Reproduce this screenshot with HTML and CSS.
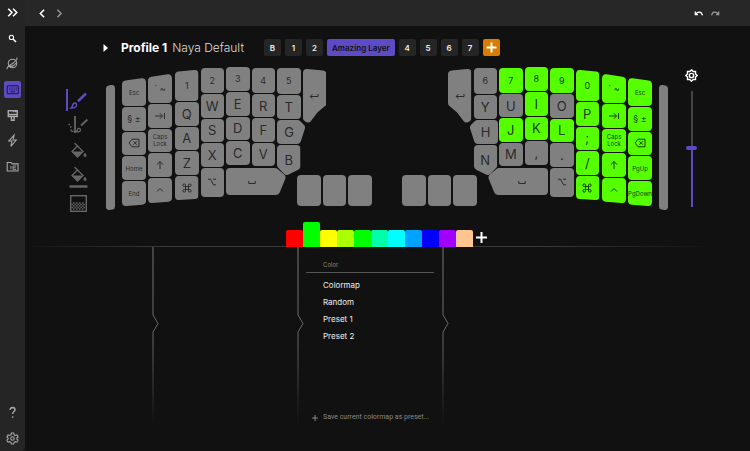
FILE: index.html
```html
<!DOCTYPE html>
<html lang="en">
<head>
<meta charset="utf-8">
<title>Naya Default</title>
<link rel="stylesheet" href="styles.css">
</head>
<body>
<svg class="defs" aria-hidden="true">
  <symbol id="s-top" viewBox="0 0 24 28" preserveAspectRatio="none"><polygon points="4,6.500 20,4.300 20,24 4,24"/></symbol>
  <symbol id="s-bot" viewBox="0 0 24 25" preserveAspectRatio="none"><polygon points="4,4 20,4 20,19.700 4,21"/></symbol>
  <symbol id="s-top2" viewBox="0 0 24 31" preserveAspectRatio="none"><polygon points="4,5.400 20,4 20,27 4,27"/></symbol>
  <symbol id="s-bot2" viewBox="0 0 24 25" preserveAspectRatio="none"><polygon points="4,4 20,4 20,20 4,21"/></symbol>
  <symbol id="s-enter" viewBox="0 0 24 54" preserveAspectRatio="none"><polygon points="4,4 20,5.500 20,34 11.500,41 5,49.500 4,49"/></symbol>
  <symbol id="s-g" viewBox="0 0 28 24" preserveAspectRatio="none"><polygon points="4,4 20.500,4 24,7.500 20,20 4,20"/></symbol>
  <symbol id="s-b" viewBox="0 0 24 31" preserveAspectRatio="none"><polygon points="4,4 20,4 20,22 10,27 4,20.500"/></symbol>
  <symbol id="s-space" viewBox="0 0 60 27" preserveAspectRatio="none"><polygon points="4,4 49,4 55.500,9.500 50,23 4,23"/></symbol>
  <symbol id="s-bar" viewBox="0 0 9 125" preserveAspectRatio="none"><polygon points="3,3.500 6,3 6,121.500 3,122"/></symbol>

  <symbol id="i-tab" viewBox="0 0 12 10"><path d="M1 5h7.500M5.800 2.200L8.600 5 5.800 7.800M10.500 2v6"/></symbol>
  <symbol id="i-del" viewBox="0 0 12 10"><path d="M4 1.200h7v7.600H4L1 5zM5.500 3.300l3.400 3.400M8.900 3.300L5.500 6.700"/></symbol>
  <symbol id="i-up" viewBox="0 0 12 10"><path d="M6 9V1.500M2.800 4.700L6 1.500l3.200 3.200"/></symbol>
  <symbol id="i-caret" viewBox="0 0 12 10"><path d="M3 6.500L6 3.500l3 3"/></symbol>
  <symbol id="i-cmd" viewBox="0 0 12 10"><path d="M4.500 3.500h3v3h-3zM4.500 3.500H3.300A1.300 1.300 0 1 1 4.500 2.200zM7.500 3.500V2.200A1.300 1.300 0 1 1 8.700 3.500zM7.500 6.500h1.200A1.300 1.300 0 1 1 7.500 7.800zM4.500 6.500v1.300A1.300 1.300 0 1 1 3.300 6.500z"/></symbol>
  <symbol id="i-opt" viewBox="0 0 12 10"><path d="M2 2.200h2.500l3 5.600H10M7 2.200h3"/></symbol>
  <symbol id="i-enter" viewBox="0 0 12 10"><path d="M10 3v2.500H2.200M4.400 3.200L2.200 5.500l2.200 2.200"/></symbol>
  <symbol id="i-space" viewBox="0 0 12 10"><path d="M2.800 4v2.500h6.400V4"/></symbol>
  <symbol id="i-bucket" viewBox="0 0 17 17"><path class="solid" d="M2 8.500h11L7.500 14z"/><path d="M4.500 0l3 3M7.500 3L13 8.500 7.500 14 2 8.500z" stroke-width="1.300"/><path class="solid" d="M15 9.500q3 4.200 0 4.400-3-.2 0-4.400z"/></symbol>
  <symbol id="i-edge" viewBox="0 0 7 178" preserveAspectRatio="none"><path d="M1 0V68L6 76.500 1 85V178"/></symbol>
  <linearGradient id="fade" gradientUnits="userSpaceOnUse" x1="0" y1="0" x2="0" y2="178"><stop offset="0" stop-color="#777"/><stop offset=".55" stop-color="#666"/><stop offset="1" stop-color="#111"/></linearGradient>
</svg>

<nav class="sidebar">
  <div class="nav-main">
    <button class="nav bright" aria-label="Expand"><svg viewBox="0 0 16 16"><path d="M4 4.500L7.500 8 4 11.500M8.500 4.500L12 8l-3.500 3.500" stroke-width="1.500"/></svg></button>
    <button class="nav" aria-label="Search"><svg class="bright" viewBox="0 0 16 16"><circle cx="7" cy="7" r="2"/><path d="M8.600 8.600l2.700 2.700" stroke-width="1.400"/></svg></button>
    <button class="nav" aria-label="Devices"><svg viewBox="0 0 16 16"><circle cx="8" cy="8" r="4"/><path d="M11.800 2.500c1.800.5-1.500 4-4.500 6S2 11.800 3 13.500M5 10.500q3.500 1 6.500-3"/></svg></button>
    <button class="nav current" aria-label="Keyboard"><svg viewBox="0 0 16 16"><rect x="3" y="4.500" width="10.500" height="7.500" rx="1"/><path d="M5 6.500h1M7 6.500h1M9 6.500h1M11 6.500h1M5 8.300h1M7 8.300h1M9 8.300h1M11 8.300h1M6 10.200h4.500"/></svg></button>
    <button class="nav" aria-label="Lighting"><svg viewBox="0 0 16 16"><path d="M4 3.500h8.500V9H4zM4 7h8.500M7 9v3.500h2.500V9M9 3.500V5M11 3.500V5" stroke-width="1.300"/></svg></button>
    <button class="nav" aria-label="Actions"><svg viewBox="0 0 16 16"><path d="M9.500 3L4.500 8.500h3L6.500 13.500 11.500 7.500h-3z"/></svg></button>
    <button class="nav" aria-label="Files"><svg viewBox="0 0 16 16"><path d="M3 4.200h3.500l1.200 1.300h5.500v6.800H3z"/><path d="M6.500 7.500v3M8.500 7.500v3.300M8.500 7.500h3M8.500 9.200h2.500M8.500 10.800h3" stroke-width=".8"/></svg></button>
  </div>
  <div class="nav-foot">
    <button class="nav" aria-label="Help"><svg viewBox="0 0 16 16"><path d="M5.700 5.500q.2-2.200 2.400-2.200 2.300.1 2.300 2.100 0 1.200-1.300 1.900-1 .6-1 2.200M8.100 11.500v1.500" stroke-width="1.300"/></svg></button>
    <button class="nav" aria-label="Settings"><svg viewBox="0 0 16 16"><path d="M6.900 2.900h2.200l.4 1.600 1.100.6 1.600-.5 1.100 1.900L12.100 7.600v.9l1.200 1.100-1.100 1.900-1.600-.5-1.100.6-.4 1.600H6.900l-.4-1.600-1.100-.6-1.600.5-1.100-1.900 1.200-1.100v-.9L2.700 6.500l1.100-1.900 1.600.5 1.100-.6z"/><circle cx="8" cy="8" r="1.600"/></svg></button>
  </div>
</nav>

<main class="app">
  <header class="topbar">
    <div class="pair">
      <button class="plain bright" aria-label="Back"><svg viewBox="0 0 16 16"><path d="M9.500 4.500L6 8l3.500 3.500" stroke-width="1.500"/></svg></button>
      <button class="plain" aria-label="Forward"><svg viewBox="0 0 16 16"><path d="M6 4.500L9.500 8 6 11.500" stroke-width="1.300"/></svg></button>
    </div>
    <div class="pair">
      <button class="plain bright" aria-label="Undo"><svg viewBox="0 0 16 16"><path d="M5 6v3h2.500M5.200 8.500Q7 6.500 9 6.700 11 7 11.700 9.700" stroke-width="1.200"/></svg></button>
      <button class="plain" aria-label="Redo"><svg viewBox="0 0 16 16"><path d="M11 6v3H8.500M10.800 8.500Q9 6.500 7 6.700 5 7 4.300 9.700" stroke-width="1.200"/></svg></button>
    </div>
  </header>

  <section class="profile">
    <button class="plain arrow" aria-label="Show profiles"><svg viewBox="0 0 5 8"><path d="M.5 0L5 4 .5 8z"/></svg></button>
    <h1>Profile 1 <span>Naya Default</span></h1>
    <div class="layers">
      <button>B</button><button>1</button><button>2</button><button class="active">Amazing Layer</button><button>4</button><button>5</button><button>6</button><button>7</button>
      <button class="add" aria-label="Add layer"><svg viewBox="0 0 17 17"><path d="M8.500 3.500v10M3.500 8.500h10"/></svg></button>
    </div>
  </section>

  <section class="stage">
    <div class="tools">
      <button class="tool on" aria-label="Brush"><svg viewBox="0 0 24 24"><path d="M1 0v22" stroke-width="2"/><path d="M20 4.500L12 12.200" stroke-width="2.600"/><path d="M5 19q1.500-1 1.500-2.500.5-2.500 2.800-2.500 2 1 1 3-1 2.200-5.300 2z" stroke-width="1.500"/></svg></button>
      <button class="tool" aria-label="Mirror brush"><svg viewBox="0 0 24 24"><path d="M9 2v17M21.500 5.500L15 11.500" stroke-width="1.800"/><path d="M10 17.500q1.500-.5 1.500-2 1-1.800 2.500-.8 1 1.500 0 2.500-1.500 1-4 .3zM7.500 17.500Q5 17.500 4.500 15.500M2.500 10.500h1.500M4 13h1.500" stroke-width="1.300"/></svg></button>
      <button class="tool small" aria-label="Fill"><svg viewBox="0 0 17 17"><use href="#i-bucket"/></svg></button>
      <button class="tool" aria-label="Fill row"><svg viewBox="0 0 24 24"><use href="#i-bucket" x="4" y="1" width="17" height="17"/><path d="M3.500 20.500h18" stroke-width="2.400"/></svg></button>
      <button class="tool small" aria-label="Transparency"><svg viewBox="0 0 17 17"><rect x=".7" y=".7" width="15.600" height="15.600" stroke-width="1.400"/><path d="M3 8h12M3 11h12M3 14h12" stroke-dasharray="1.500 1.500" stroke-width="1.500"/><path d="M1.500 9.500h14M1.500 12.500h14" stroke-dasharray="1.500 1.500" stroke-width="1.500"/></svg></button>
    </div>

    <div class="board">
      <svg class="bar"><use href="#s-bar"/></svg>
      <div class="half left">
        <div class="outer">
          <div class="col c1">
            <button class="key word shaped"><svg class="shape"><use href="#s-top"/></svg><span>Esc</span></button>
            <button class="key num">§ ±</button>
            <button class="key" aria-label="Backspace"><svg class="ico"><use href="#i-del"/></svg></button>
            <button class="key word">Home</button>
            <button class="key word shaped"><svg class="shape"><use href="#s-bot"/></svg><span>End</span></button>
          </div>
          <div class="col c2">
            <button class="key num shaped"><svg class="shape"><use href="#s-top"/></svg><span>` ~</span></button>
            <button class="key" aria-label="Tab"><svg class="ico"><use href="#i-tab"/></svg></button>
            <button class="key word">Caps Lock</button>
            <button class="key" aria-label="Up"><svg class="ico"><use href="#i-up"/></svg></button>
            <button class="key shaped" aria-label="Control"><svg class="shape"><use href="#s-bot"/></svg><svg class="ico"><use href="#i-caret"/></svg></button>
          </div>
        </div>
        <div class="inner">
          <div class="col c3">
            <button class="key num shaped"><svg class="shape"><use href="#s-top2"/></svg><span>1</span></button>
            <button class="key">Q</button><button class="key">A</button><button class="key">Z</button>
            <button class="key shaped" aria-label="Command"><svg class="shape"><use href="#s-bot2"/></svg><svg class="ico"><use href="#i-cmd"/></svg></button>
          </div>
          <div class="col c4">
            <button class="key num">2</button><button class="key">W</button><button class="key">S</button><button class="key">X</button>
            <button class="key" aria-label="Option"><svg class="ico"><use href="#i-opt"/></svg></button>
          </div>
          <div class="mid">
            <div class="col c5"><button class="key num">3</button><button class="key">E</button><button class="key">D</button><button class="key">C</button></div>
            <div class="col c6"><button class="key num">4</button><button class="key">R</button><button class="key">F</button><button class="key">V</button></div>
            <button class="key space shaped" aria-label="Space"><svg class="shape"><use href="#s-space"/></svg><svg class="ico"><use href="#i-space"/></svg></button>
          </div>
          <div class="col c7">
            <button class="key num">5</button><button class="key">T</button>
            <button class="key wide shaped"><svg class="shape"><use href="#s-g"/></svg><span>G</span></button>
            <button class="key shaped"><svg class="shape"><use href="#s-b"/></svg><span>B</span></button>
          </div>
          <div class="col c8"><button class="key shaped" aria-label="Enter"><svg class="shape"><use href="#s-enter"/></svg><svg class="ico"><use href="#i-enter"/></svg></button></div>
        </div>
      </div>

      <div class="thumbs">
        <div class="cluster"><button class="key" aria-label="Left thumb 1"></button><button class="key" aria-label="Left thumb 2"></button><button class="key" aria-label="Left thumb 3"></button></div>
        <div class="cluster"><button class="key" aria-label="Right thumb 1"></button><button class="key" aria-label="Right thumb 2"></button><button class="key" aria-label="Right thumb 3"></button></div>
      </div>

      <div class="half right">
        <div class="inner">
          <div class="col c8"><button class="key shaped" aria-label="Enter"><svg class="shape"><use href="#s-enter"/></svg><svg class="ico"><use href="#i-enter"/></svg></button></div>
          <div class="col c7">
            <button class="key num">6</button><button class="key">Y</button>
            <button class="key wide shaped"><svg class="shape"><use href="#s-g"/></svg><span>H</span></button>
            <button class="key shaped"><svg class="shape"><use href="#s-b"/></svg><span>N</span></button>
          </div>
          <div class="mid">
            <div class="col c6"><button class="key num lit">7</button><button class="key">U</button><button class="key lit">J</button><button class="key">M</button></div>
            <div class="col c5"><button class="key num lit">8</button><button class="key lit">I</button><button class="key lit">K</button><button class="key">,</button></div>
            <button class="key space shaped" aria-label="Space"><svg class="shape"><use href="#s-space"/></svg><svg class="ico"><use href="#i-space"/></svg></button>
          </div>
          <div class="col c4">
            <button class="key num lit">9</button><button class="key">O</button><button class="key lit">L</button><button class="key">.</button>
            <button class="key" aria-label="Option"><svg class="ico"><use href="#i-opt"/></svg></button>
          </div>
          <div class="col c3">
            <button class="key num lit shaped"><svg class="shape"><use href="#s-top2"/></svg><span>0</span></button>
            <button class="key lit">P</button><button class="key lit">;</button><button class="key lit">/</button>
            <button class="key lit shaped" aria-label="Command"><svg class="shape"><use href="#s-bot2"/></svg><svg class="ico"><use href="#i-cmd"/></svg></button>
          </div>
        </div>
        <div class="outer">
          <div class="col c2">
            <button class="key num lit shaped"><svg class="shape"><use href="#s-top"/></svg><span>` ~</span></button>
            <button class="key lit" aria-label="Tab"><svg class="ico"><use href="#i-tab"/></svg></button>
            <button class="key word lit">Caps Lock</button>
            <button class="key lit" aria-label="Up"><svg class="ico"><use href="#i-up"/></svg></button>
            <button class="key lit shaped" aria-label="Control"><svg class="shape"><use href="#s-bot"/></svg><svg class="ico"><use href="#i-caret"/></svg></button>
          </div>
          <div class="col c1">
            <button class="key word lit shaped"><svg class="shape"><use href="#s-top"/></svg><span>Esc</span></button>
            <button class="key num lit">§ ±</button>
            <button class="key lit" aria-label="Backspace"><svg class="ico"><use href="#i-del"/></svg></button>
            <button class="key word lit">PgUp</button>
            <button class="key word lit shaped"><svg class="shape"><use href="#s-bot"/></svg><span>PgDown</span></button>
          </div>
        </div>
      </div>
      <svg class="bar flip"><use href="#s-bar"/></svg>
    </div>

    <div class="brightness">
      <svg viewBox="0 0 12 12"><path d="M6 .8L7.500 2.300 9.700 2.300 9.700 4.500 11.200 6 9.700 7.500 9.700 9.700 7.500 9.700 6 11.200 4.500 9.700 2.300 9.700 2.300 7.500.8 6 2.300 4.500 2.300 2.300 4.500 2.300z"/><circle cx="6" cy="6" r="2"/></svg>
      <input type="range" min="0" max="100" value="51" aria-label="Brightness">
    </div>
  </section>

  <section class="palette">
    <input type="radio" name="color" class="red" aria-label="Red">
    <input type="radio" name="color" class="green" aria-label="Green" checked>
    <input type="radio" name="color" class="yellow" aria-label="Yellow">
    <input type="radio" name="color" class="lime" aria-label="Lime">
    <input type="radio" name="color" class="green" aria-label="Bright green">
    <input type="radio" name="color" class="mint" aria-label="Mint">
    <input type="radio" name="color" class="cyan" aria-label="Cyan">
    <input type="radio" name="color" class="sky" aria-label="Sky">
    <input type="radio" name="color" class="blue" aria-label="Blue">
    <input type="radio" name="color" class="purple" aria-label="Purple">
    <input type="radio" name="color" class="peach" aria-label="Peach">
    <button class="plain" aria-label="Add color"><svg viewBox="0 0 17 17"><path d="M8.500 3v11M3 8.500h11" stroke-width="2"/></svg></button>
  </section>

  <section class="panels">
    <div class="panel"><svg class="edge"><use href="#i-edge"/></svg></div>
    <div class="panel">
      <svg class="edge"><use href="#i-edge"/></svg>
      <div class="menu">
        <h2>Color</h2>
        <ul>
          <li><button>Colormap</button></li>
          <li><button>Random</button></li>
          <li><button>Preset 1</button></li>
          <li><button>Preset 2</button></li>
        </ul>
        <button class="save"><svg viewBox="0 0 6 6"><path d="M3 0v6M0 3h6"/></svg>Save current colormap as preset...</button>
      </div>
    </div>
    <div class="panel"><svg class="edge"><use href="#i-edge"/></svg></div>
  </section>
</main>
</body>
</html>
```
FILE: styles.css
```css
* { box-sizing: border-box; }
body {
  margin: 0;
  min-height: 100vh;
  display: flex;
  background: #111;
  color: #fff;
  font-family: Inter, "Liberation Sans", sans-serif;
}
button { margin: 0; padding: 0; border: 0; background: none; color: inherit; font: inherit; }
svg { display: block; fill: none; stroke: currentColor; stroke-width: 1; }
.defs { position: absolute; width: 0; height: 0; }

.sidebar {
  width: 25px;
  flex: none;
  display: flex;
  flex-direction: column;
  justify-content: space-between;
  background: #252525;
  border-bottom-right-radius: 4px;
}
.nav-main { height: 179px; display: grid; grid-auto-rows: 1fr; place-items: center; }
.nav-foot { height: 51px; display: grid; grid-auto-rows: 1fr; place-items: center; }
.nav { width: 17px; height: 17px; border-radius: 2px; color: #aaa; }
.nav svg { width: 17px; height: 17px; }
.bright, .nav.bright { color: #fff; }
.nav.current { background: #5c4bc4; color: #1b1640; }

.app { flex: 1; min-width: 0; display: flex; flex-direction: column; }
.topbar {
  height: 26px;
  padding: 0 26px 0 9px;
  display: flex;
  align-items: center;
  justify-content: space-between;
  background: #272727;
}
.pair { display: flex; }
.plain { color: #999; }
.plain svg { width: 17px; height: 17px; }
.plain.bright { color: #fff; }

.profile { display: flex; align-items: center; height: 17px; margin: 13px 0 0 78px; }
.arrow svg { width: 5px; height: 8px; fill: #fff; stroke: none; }
h1 { margin: 0 0 0 13px; width: 143px; font-size: 12px; line-height: 17px; font-weight: 700; white-space: nowrap; }
h1 span { margin-left: 2px; font-weight: 300; color: #ddd; }
.layers { display: flex; gap: 4px; }
.layers button {
  min-width: 17px;
  height: 17px;
  border-radius: 2px;
  background: #252525;
  color: #eee;
  font-size: 8px;
  font-weight: 600;
}
.layers .active { padding: 0 5px; background: #5c4bc4; color: #111; }
.layers .add { background: #d97c00; }
.layers .add svg { stroke: #fff; stroke-width: 2; }

.stage { display: flex; justify-content: center; margin-top: 11px; height: 154px; }
.tools { width: 40px; height: 149px; padding-top: 21px; display: grid; grid-auto-rows: 1fr; color: #666; }
.tool { width: 24px; display: grid; place-items: center; align-content: center; }
.tool svg { width: 24px; height: 24px; }
.tool.small svg { width: 17px; height: 17px; }
.tool.on { color: #5c4bc4; }
.solid { fill: currentColor; stroke: none; }

.board { width: 562px; display: flex; align-items: flex-start; }
.bar { flex: none; width: 9px; height: 125px; margin-top: 18px; color: #808080; fill: #808080; stroke-width: 6; stroke-linejoin: round; }
.flip { transform: scaleX(-1); }
.half { width: 204px; flex: none; display: grid; gap: 3px; }
.half.left { grid-template-columns: 50px minmax(0, 1fr); margin-left: 7px; }
.half.right { grid-template-columns: minmax(0, 1fr) 50px; margin-right: 7px; }
.outer { display: grid; grid-template-columns: repeat(2, minmax(0, 1fr)); gap: 2px; align-items: start; }
.inner { display: grid; grid-template-columns: repeat(6, minmax(0, 1fr)); gap: 2px; align-items: start; }
.mid { grid-column: span 2; display: grid; grid-template-columns: repeat(2, minmax(0, 1fr)); gap: 2px; align-items: start; }
.col { display: grid; grid-template-columns: minmax(0, 1fr); gap: 1px; }
.c1 { margin-top: 11px; height: 128px; grid-template-rows: 28px repeat(3, 1fr) 25px; }
.c2 { margin-top: 7px; height: 129px; grid-template-rows: 29px repeat(3, 1fr) 25px; }
.c3 { margin-top: 3px; height: 130px; grid-template-rows: 31px repeat(3, 1fr) 24px; }
.c4 { margin-top: 1px; height: 129px; grid-template-rows: 25px repeat(3, 1fr) 29px; }
.c5 { height: 98px; grid-template-rows: repeat(4, 1fr); }
.c6 { margin-top: 1px; height: 98px; grid-template-rows: 25px repeat(3, 1fr); }
.c7 { margin-top: 1px; height: 107px; grid-template-rows: 26px 24px 24px 1fr; }
.c8 { margin-top: 2px; height: 54px; }

.key {
  --key: #808080;
  position: relative;
  min-width: 0;
  display: grid;
  place-items: center;
  place-content: center;
  border-radius: 4px;
  background: var(--key);
  color: #2b2b2b;
  font-size: 13px;
  line-height: 14px;
}
.key.lit { --key: #55ff00; color: #163f08; }
.key.num { font-size: 9px; }
.key.word { font-size: 6px; line-height: 7px; }
.key.shaped { background: none; }
.key > span, .ico { position: relative; }
.shape {
  position: absolute;
  inset: 0;
  width: 100%;
  height: 100%;
  fill: var(--key);
  stroke: var(--key);
  stroke-width: 8;
  stroke-linejoin: round;
}
.right .shape { transform: scaleX(-1); }
.ico { width: 12px; height: 10px; }
.wide { width: 28px; padding-right: 4px; }
.space { grid-column: span 2; width: 60px; height: 27px; padding-right: 8px; }
.right .wide { margin-left: -4px; padding: 0 0 0 4px; }
.right .space { margin-left: -11px; padding: 0 0 0 8px; }

.thumbs { flex: 1; margin: 108px -29px 0; display: flex; justify-content: space-between; }
.cluster { width: 75px; height: 31px; display: grid; grid-template-columns: repeat(3, minmax(0, 1fr)); gap: 2px; }

.brightness { width: 41px; padding: 2px 0 0 17px; }
.brightness svg { width: 13px; height: 13px; stroke-width: 1.3; }
.brightness input {
  appearance: none;
  writing-mode: vertical-lr;
  direction: rtl;
  display: block;
  width: 13px;
  height: 116px;
  margin: 9px 0 0;
  background: linear-gradient(#444 50%, #5c4bc4 50%) center / 2px 100% no-repeat;
}
.brightness input::-webkit-slider-thumb { appearance: none; width: 11px; height: 4px; border-radius: 2px; background: #5c4bc4; }

.palette {
  display: flex;
  justify-content: center;
  align-items: flex-end;
  height: 26px;
  border-bottom: 1px solid;
  border-image: linear-gradient(90deg, #111, #3a3a3a 20%, #3a3a3a 70%, #111 95%) 1;
}
.palette input { appearance: none; width: 17px; height: 17px; margin: 0 0 -1px; border-radius: 2px 2px 0 0; }
.palette input:checked { height: 25px; }
.palette .plain { color: #fff; }
.red { background: #f00; }
.green { background: #0f0; }
.yellow { background: #ff0; }
.lime { background: #af0; }
.mint { background: #00ffa8; }
.cyan { background: #0ff; }
.sky { background: #00a2ff; }
.blue { background: #00f; }
.purple { background: #a200ff; }
.peach { background: #ffc591; }

.panels { display: grid; grid-template-columns: repeat(3, 145px); padding-left: 127px; }
.panel { display: flex; height: 178px; }
.edge { flex: none; width: 7px; height: 178px; stroke: url(#fade); }
.menu { width: 128px; margin-left: 2px; display: flex; flex-direction: column; }
h2 { margin: 0; padding: 13px 0 3px 17px; border-bottom: 1px solid #555; font-size: 6px; line-height: 9px; font-weight: 400; color: #888; }
ul { list-style: none; margin: 4px 0 0; padding: 0 0 0 17px; }
li { height: 17px; font-size: 8px; line-height: 17px; color: #eee; }
li button { display: block; }
.save { margin-top: auto; padding-left: 6px; display: flex; align-items: center; gap: 5px; font-family: Roboto, sans-serif; font-size: 7px; line-height: 15px; color: #888; white-space: nowrap; }
.save svg { width: 6px; height: 6px; }
```
